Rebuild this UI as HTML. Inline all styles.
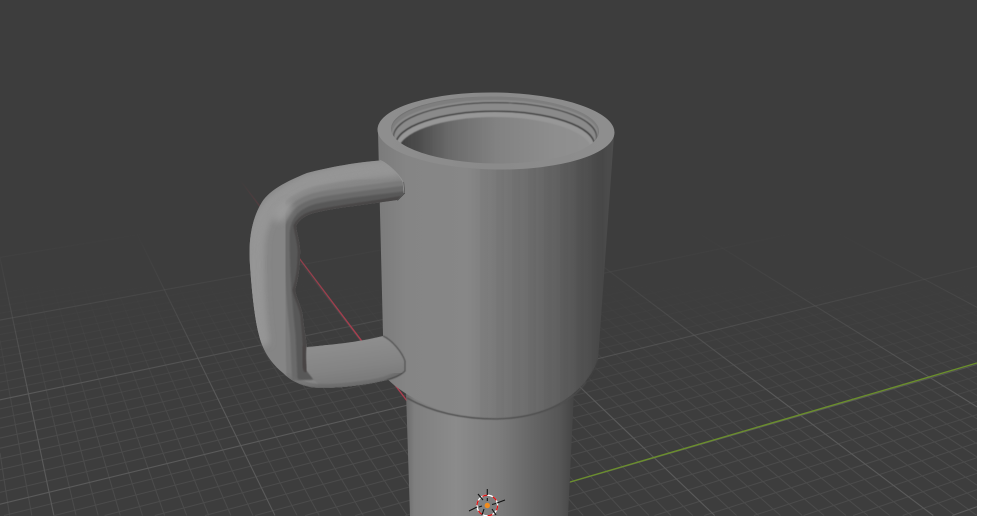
<!DOCTYPE html>
<html>
<head>
<meta charset="utf-8">
<style>
html,body{margin:0;padding:0;width:982px;height:516px;overflow:hidden;background:#fff}
svg{position:absolute;left:0;top:0;display:block;overflow:hidden}
</style>
</head>
<body>
<svg id="s" width="982" height="516" viewBox="0 0 982 516" xmlns="http://www.w3.org/2000/svg">
<defs>
<linearGradient id="minor" gradientUnits="userSpaceOnUse" x1="0" y1="282" x2="0" y2="440">
<stop offset="0" stop-color="#4a4a4a" stop-opacity="0"/><stop offset="1" stop-color="#4b4b4b" stop-opacity="1"/>
</linearGradient>
<linearGradient id="major" gradientUnits="userSpaceOnUse" x1="0" y1="232" x2="0" y2="400">
<stop offset="0" stop-color="#555" stop-opacity="0"/><stop offset="1" stop-color="#5a5a5a" stop-opacity="1"/>
</linearGradient>
<linearGradient id="red" gradientUnits="userSpaceOnUse" x1="0" y1="180" x2="0" y2="345">
<stop offset="0" stop-color="#7a3a42" stop-opacity="0"/><stop offset=".45" stop-color="#92404c" stop-opacity=".95"/><stop offset="1" stop-color="#b03c4e"/>
</linearGradient>
<linearGradient id="body" gradientUnits="userSpaceOnUse" x1="378" y1="0" x2="614" y2="0">
<stop offset="0" stop-color="#7b7b7b"/><stop offset=".12" stop-color="#858585"/><stop offset=".38" stop-color="#878787"/>
<stop offset=".5" stop-color="#797979"/><stop offset=".62" stop-color="#6f6f6f"/><stop offset=".75" stop-color="#626262"/>
<stop offset=".86" stop-color="#535353"/><stop offset=".95" stop-color="#474747"/><stop offset="1" stop-color="#505050"/>
</linearGradient>
<linearGradient id="low" gradientUnits="userSpaceOnUse" x1="406" y1="0" x2="574" y2="0">
<stop offset="0" stop-color="#6b6b6b"/><stop offset=".05" stop-color="#7f7f7f"/><stop offset=".3" stop-color="#8b8b8b"/>
<stop offset=".55" stop-color="#7c7c7c"/><stop offset=".78" stop-color="#636363"/><stop offset=".92" stop-color="#555"/><stop offset="1" stop-color="#444"/>
</linearGradient>
<linearGradient id="hole" gradientUnits="userSpaceOnUse" x1="398" y1="0" x2="595" y2="0">
<stop offset="0" stop-color="#3f3f3f"/><stop offset=".1" stop-color="#4c4c4c"/><stop offset=".26" stop-color="#6a6a6a"/>
<stop offset=".5" stop-color="#828282"/><stop offset=".8" stop-color="#8e8e8e"/><stop offset="1" stop-color="#919191"/>
</linearGradient>
<linearGradient id="rim" gradientUnits="userSpaceOnUse" x1="378" y1="0" x2="614" y2="0">
<stop offset="0" stop-color="#8e8e8e"/><stop offset=".5" stop-color="#8a8a8a"/><stop offset="1" stop-color="#8e8e8e"/>
</linearGradient>
<linearGradient id="lowerArm" gradientUnits="userSpaceOnUse" x1="350" y1="342" x2="356" y2="388">
<stop offset="0" stop-color="#8e8e8e"/><stop offset=".55" stop-color="#848484"/><stop offset="1" stop-color="#767676"/>
</linearGradient>
<linearGradient id="fadeA" gradientUnits="userSpaceOnUse" x1="280" y1="0" x2="320" y2="0">
<stop offset="0" stop-color="#6e6e6e" stop-opacity="0"/><stop offset="1" stop-color="#6e6e6e"/>
</linearGradient>
<linearGradient id="fadeB" gradientUnits="userSpaceOnUse" x1="285" y1="0" x2="320" y2="0">
<stop offset="0" stop-color="#5a5a5a" stop-opacity="0"/><stop offset="1" stop-color="#5a5a5a"/>
</linearGradient>
<pattern id="facet" patternUnits="userSpaceOnUse" x="480" y="0" width="16" height="10">
<rect x="0" y="0" width="8" height="10" fill="#000" opacity=".018"/>
</pattern>
<clipPath id="handleClip"><path d="M380,160.5 C384,161 398,172 403,182 L404,193 L397,200 C370,204 335,208 318,212 C308,214 300,218 296,226 C297,235 301,245 300,255 C300,268 298,280 295,290 C297,300 303,310 303,318 C304,328 306,338 307,347 C330,345 360,342 383,336 C392,340 402,352 405,361 L405,371 C400,376 394,378 387,380 C370,384 345,388 322,388 C305,388 292,382 283,373 C272,364 263,352 259,335 C255,320 252,295 250,265 C248,240 252,218 262,202 C270,190 285,182 307,173 C330,167 358,162 380,160.5 Z"/></clipPath>
<clipPath id="innerClip"><ellipse cx="495" cy="130" rx="104" ry="33.5" transform="rotate(.8 495 130)"/></clipPath>
<clipPath id="bodyClip"><path d="M378,131 L384,375 C400,395 445,419 497,419 C545,418 585,395 598,360 L614,135 Z"/></clipPath>
<filter id="b3" x="-60%" y="-60%" width="220%" height="220%"><feGaussianBlur stdDeviation="3.5"/></filter>
<filter id="b1" x="-10%" y="-10%" width="120%" height="120%"><feGaussianBlur stdDeviation=".9"/></filter>
<filter id="b2" x="-10%" y="-10%" width="120%" height="120%"><feGaussianBlur stdDeviation=".45"/></filter>
</defs>
<rect width="982" height="516" fill="#3d3d3d"/>
<g id="grid"></g>
<line x1="570" y1="482" x2="977" y2="363" stroke="#6b8f2c" stroke-width="1.4"/>
<line x1="240" y1="180" x2="420" y2="418" stroke="url(#red)" stroke-width="1.3"/>

<!-- lower cylinder -->
<path d="M406,392 L410,516 L568,516 L574,392 Z" fill="url(#low)"/>
<!-- main body -->
<path d="M378,131 L384,375 C400,395 445,419 497,419 C545,418 585,395 598,360 L614,135 Z" fill="url(#body)"/>
<g clip-path="url(#bodyClip)"><rect x="480" y="130" width="134" height="290" fill="url(#facet)"/></g>
<path d="M407,398 C430,411 460,419 497,419 C535,418 570,405 586,382" fill="none" stroke="#4d4d4d" stroke-width="1.3" filter="url(#b2)"/>
<path d="M586,382 C592,375 596,368 598,360" fill="none" stroke="#3f3f3f" stroke-width="1.3" filter="url(#b2)"/>

<!-- rim -->
<ellipse cx="496" cy="131" rx="118.5" ry="38.5" transform="rotate(.8 496 131)" fill="url(#rim)"/>
<g clip-path="url(#innerClip)">
<g filter="url(#b2)">
<rect x="380" y="90" width="230" height="80" fill="#6e6e6e"/>
<ellipse cx="495" cy="130" rx="104" ry="34" fill="#7e7e7e"/>
<ellipse cx="495" cy="134" rx="103" ry="34" fill="#8c8c8c"/>
<ellipse cx="495" cy="136" rx="102" ry="34" fill="#454545"/>
<ellipse cx="495" cy="137.2" rx="101" ry="34" fill="#8a8a8a"/>
<ellipse cx="495" cy="144.5" rx="100" ry="34" fill="#3c3c3c"/>
<ellipse cx="495" cy="146" rx="99" ry="34" fill="#979797"/>
<ellipse cx="495" cy="151" rx="97" ry="34" fill="url(#hole)"/>
</g>
</g>

<!-- handle -->
<path d="M397,200 L404,193 L403,182" fill="none" stroke="#4a4a4a" stroke-width="2"/>
<g clip-path="url(#handleClip)">
<rect x="240" y="150" width="175" height="245" fill="#858585"/>
<path d="M261,345 C256,310 255,275 256,245 C258,215 272,198 310,182 C340,173 365,170 400,167" fill="none" stroke="#969696" stroke-width="17" filter="url(#b3)"/>
<g fill="none" stroke-linejoin="round" filter="url(#b1)">
<path d="M410,198 C370,203 335,207 318,211 C304,215 297,222 297,236 C297,265 299,300 303,335 L305,380" stroke="#878787" stroke-width="50"/>
<path d="M410,198 C370,203 335,207 318,211 C304,215 297,222 297,236 C297,265 299,300 303,335 L305,380" stroke="#7a7a7a" stroke-width="37"/>
<path d="M410,198 C370,203 335,207 318,211 C304,215 297,222 297,236 C297,265 299,300 303,335 L305,380" stroke="#6a6a6a" stroke-width="26"/>
<path d="M410,198 C370,203 335,207 318,211 C304,215 297,222 297,236 C297,265 299,300 303,335 L305,380" stroke="#585858" stroke-width="15"/>
</g>
<path d="M261,345 C256,310 255,275 256,245 C258,215 272,198 310,182 C340,173 365,170 400,167" fill="none" stroke="#959595" stroke-width="11" filter="url(#b3)" opacity=".9"/>
<ellipse cx="283" cy="212" rx="6" ry="12" transform="rotate(40 283 212)" fill="#a2a2a2" opacity=".75" filter="url(#b3)"/>
<path d="M404,198 C370,204 335,208 318,212 C308,214 300,218 296,226 C297,235 301,245 300,255 C300,268 298,280 295,290 C297,300 303,310 303,318 C304,328 306,345 306,368" fill="none" stroke="#4a4646" stroke-width="5" filter="url(#b2)"/>
<path d="M306,347 C330,345 360,342 383,336 L410,352 L410,385 L330,392 C320,388 312,378 306,370 Z" fill="url(#lowerArm)" filter="url(#b2)"/>
<path d="M405,375 C400,379 394,380 387,383 C370,388 345,391 322,391 C305,391 292,385 283,376" fill="none" stroke="url(#fadeA)" stroke-width="14" filter="url(#b1)"/>
<path d="M405,375 C400,379 394,380 387,383 C370,388 345,391 322,391 C305,391 292,385 283,376" fill="none" stroke="url(#fadeB)" stroke-width="7" filter="url(#b2)"/>
<path d="M304,348 C302,355 303,364 306,370" fill="none" stroke="#484444" stroke-width="5" stroke-linecap="round" filter="url(#b1)"/>
</g>
<path d="M383,336 C392,340 402,352 405,361 L405,371 C400,376 394,378 387,380" fill="none" stroke="#4c4c4c" stroke-width="1" filter="url(#b2)"/>
<path d="M380,160.5 C384,161 398,172 403,182 L404,193" fill="none" stroke="#959595" stroke-width=".8"/>

<!-- 3D cursor -->
<g>
<circle cx="487.3" cy="505.5" r="10.3" fill="none" stroke="#fff" stroke-width="1.3"/>
<circle cx="487.3" cy="505.5" r="10.3" fill="none" stroke="#e01010" stroke-width="1.3" stroke-dasharray="5 5.8"/>
<g stroke="#111" stroke-width="1.1">
<line x1="487.3" y1="489" x2="487.3" y2="495"/>
<line x1="487.3" y1="498" x2="487.3" y2="501"/>
<line x1="478" y1="494" x2="483" y2="500"/>
<line x1="505" y1="500" x2="497" y2="503"/>
<line x1="496" y1="503.5" x2="492" y2="504.5"/>
<line x1="469" y1="511" x2="477" y2="507"/>
<line x1="479" y1="507" x2="482" y2="506"/>
<line x1="492" y1="509" x2="496" y2="515"/>
<line x1="484" y1="509" x2="482" y2="515"/>
</g>
<circle cx="487.3" cy="505.5" r="2.7" fill="#f28c1e"/>
</g>
<rect x="977" y="0" width="5" height="516" fill="#fff"/>
</svg>
<script>
(function(){
var O=[488,506],VX=[-111,-272],VY=[3100,-250],g=.015,h=.0068,NS="http://www.w3.org/2000/svg",G=document.getElementById("grid");
function P(u,v){var d=1+g*u+h*v;return [(O[0]+g*u*VX[0]+h*v*VY[0])/d,(O[1]+g*u*VX[1]+h*v*VY[1])/d];}
function clip(a,b){var t0=0,t1=1,dx=b[0]-a[0],dy=b[1]-a[1],p=[-dx,dx,-dy,dy],q=[a[0],977-a[0],a[1]-232,515.5-a[1]];
for(var i=0;i<4;i++){if(p[i]===0){if(q[i]<0)return null;continue;}var r=q[i]/p[i];if(p[i]<0){if(r>t1)return null;if(r>t0)t0=r;}else{if(r<t0)return null;if(r<t1)t1=r;}}
return [[a[0]+t0*dx,a[1]+t0*dy],[a[0]+t1*dx,a[1]+t1*dy]];}
function L(a,b,m){var c=clip(a,b);if(!c)return;a=c[0];b=c[1];var l=document.createElementNS(NS,"line");l.setAttribute("x1",a[0].toFixed(1));l.setAttribute("y1",a[1].toFixed(1));l.setAttribute("x2",b[0].toFixed(1));l.setAttribute("y2",b[1].toFixed(1));l.setAttribute("stroke",m?"url(#major)":"url(#minor)");l.setAttribute("stroke-width",m?"1.1":"1");G.appendChild(l);}
var all=[];
for(var u=-50;u<=90;u++){var v1=(.12-1-g*u)/h;all.push([P(u,v1),P(u,400),u%10==0]);}
for(var v=-110;v<=200;v++){var u1=(.12-1-h*v)/g;all.push([P(u1,v),P(300,v),v%10==0]);}
all.sort(function(a,b){return a[2]-b[2]});
all.forEach(function(l){L(l[0],l[1],l[2]);});
})();
</script>
</body>
</html>
